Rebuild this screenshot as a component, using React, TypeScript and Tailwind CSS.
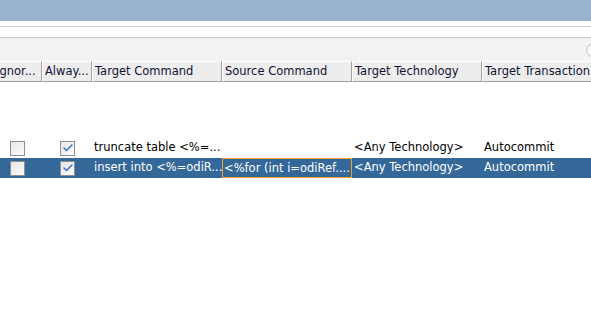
import { Check } from "lucide-react";

const cols = [
  { label: "Ignor...", w: "w-[49px]" },
  { label: "Alway...", w: "w-[50px]" },
  { label: "Target Command", w: "w-[130px]" },
  { label: "Source Command", w: "w-[130px]" },
  { label: "Target Technology", w: "w-[130px]" },
  { label: "Target Transaction", w: "w-[130px]" },
];

const rows = [
  { target: "truncate table <%=...", source: "", tech: "<Any Technology>", tx: "Autocommit", selected: false },
  { target: "insert into <%=odiR...", source: "<%for (int i=odiRef....", tech: "<Any Technology>", tx: "Autocommit", selected: true },
];

function Box({ checked }: { checked: boolean }) {
  return (
    <div className="w-[15px] h-[15px] border border-[#8f8f8f] bg-gradient-to-br from-[#e6e6e6] to-[#fbfbfb] flex items-center justify-center">
      {checked && <Check size={12} strokeWidth={3} className="text-[#3d6fc8]" />}
    </div>
  );
}

export default function App() {
  return (
    <div className="w-[591px] h-[310px] bg-white overflow-hidden font-['DejaVu_Sans',sans-serif] text-[11.5px] text-black">
      {/* title band */}
      <div className="h-[21px] bg-[#99b4d1]" />
      <div className="h-[5px] bg-white" />
      {/* filter strip */}
      <div className="h-[11px] border-t border-[#c8c8c8] bg-white" />
      <div className="relative h-[24px] border-t border-[#c8c8c8] bg-[#f2f2f2]">
        <div className="absolute left-[586px] top-[5px] w-[14px] h-[14px] rounded-full border border-[#c4c4c4] bg-[#f8f8f8]" />
      </div>

      <div className="ml-[-7px]">
        {/* header */}
        <div className="flex h-[21px]">
          {cols.map((c) => (
            <div
              key={c.label}
              className={`${c.w} shrink-0 h-full bg-[#ededed] border border-[#a0a0a0] border-l-white border-t-white pl-[2px] leading-[19px] whitespace-nowrap overflow-hidden text-[#111133]`}
            >
              {c.label}
            </div>
          ))}
        </div>

        <div className="h-[56px]" />

        {rows.map((r, i) => (
          <div
            key={i}
            className={`flex h-[20px] items-center whitespace-nowrap ${r.selected ? "bg-[#346899] text-white" : "text-black"}`}
          >
            <div className="w-[49px] shrink-0 pl-[17px]">
              <Box checked={false} />
            </div>
            <div className="w-[50px] shrink-0 pl-[18px]">
              <Box checked />
            </div>
            <div className="w-[130px] shrink-0 pl-[2px] overflow-hidden">{r.target}</div>
            <div
              className={`w-[130px] shrink-0 h-full pl-[1px] overflow-hidden leading-[18px] ${r.selected ? "border border-[#f0a030]" : ""}`}
            >
              {r.source}
            </div>
            <div className="w-[130px] shrink-0 pl-[2px] overflow-hidden">{r.tech}</div>
            <div className="w-[130px] shrink-0 pl-[2px] overflow-hidden">{r.tx}</div>
          </div>
        ))}
      </div>
    </div>
  );
}
